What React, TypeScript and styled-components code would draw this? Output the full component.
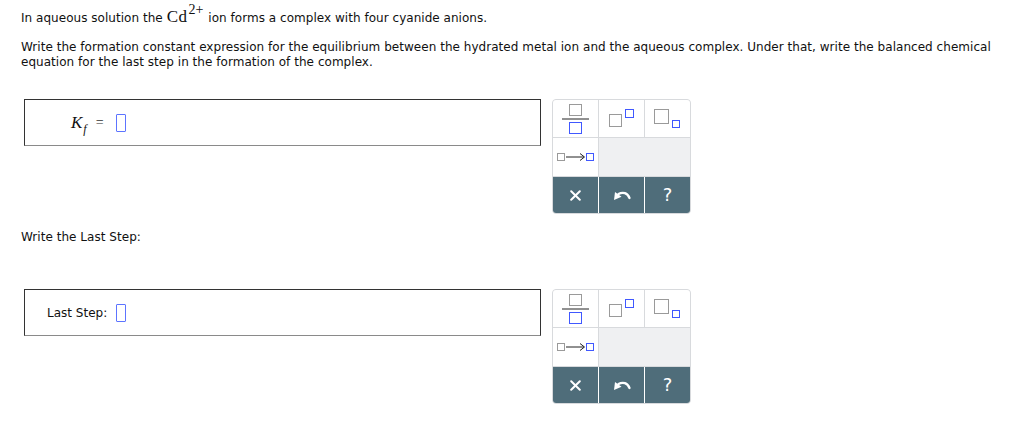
import React from "react";
import styled, { createGlobalStyle } from "styled-components";

const Global = createGlobalStyle`
  html, body { margin: 0; padding: 0; background: #fff; }
  body { font-family: "DejaVu Sans", Verdana, sans-serif; font-size: 12px; color: #111; }
`;

const Page = styled.div`
  padding: 9px 0 0 21px;
  width: 1003px;
`;

const Para = styled.p<{ $top?: number }>`
  margin: ${(p) => p.$top ?? 0}px 0 0 0;
  line-height: 15px;
  font-size: 12px;
  letter-spacing: 0.035px;
`;

const Serif = styled.span`
  font-family: "Liberation Serif", "Times New Roman", serif;
  font-size: 17px;
  letter-spacing: 0.5px;
`;

const Sup = styled.span`
  font-family: "Liberation Serif", serif;
  font-size: 14px;
  vertical-align: 8px;
  line-height: 0;
  margin-left: 1px;
  margin-right: 1px;
`;

const Section = styled.div<{ $top: number }>`
  display: flex;
  align-items: flex-start;
  gap: 11px;
  margin-top: ${(p) => p.$top}px;
  margin-left: 3px;
`;

const AnswerBox = styled.div`
  width: 515px;
  height: 45px;
  border: 1px solid #333;
  border-bottom-color: #8a8a8a;
  display: flex;
  align-items: center;
`;

const KLabel = styled.span`
  font-family: "Liberation Serif", serif;
  font-style: italic;
  font-size: 17px;
  margin-left: 46px;
  display: inline-flex;
  align-items: baseline;
`;

const SubF = styled.span`
  font-size: 12px;
  position: relative;
  top: 5px;
  margin-left: 1px;
`;

const Eq = styled.span`
  font-family: "Liberation Serif", serif;
  font-size: 14px;
  margin: 0 12px 0 9px;
  color: #333;
`;

const Slot = styled.span`
  display: inline-block;
  width: 8px;
  height: 16px;
  border: 1.5px solid #5d74ff;
  border-radius: 1px;
`;

const StepLabel = styled.span`
  margin-left: 22px;
  margin-right: 9px;
  font-size: 12px;
`;

const Palette = styled.div`
  width: 137px;
  border: 1px solid #d8dadd;
  border-radius: 4px;
  overflow: hidden;
  display: grid;
  grid-template-columns: 45px 45px 45px;
  grid-template-rows: 37px 38px 36px;
  column-gap: 1px;
  row-gap: 1px;
  background: #d8dadd;
`;

const Cell = styled.div<{ $empty?: boolean; $span?: number }>`
  background: ${(p) => (p.$empty ? "#eff0f2" : "#fff")};
  grid-column: span ${(p) => p.$span ?? 1};
  display: flex;
  align-items: center;
  justify-content: center;
`;

const DarkRow = styled.div`
  grid-column: span 3;
  display: grid;
  grid-template-columns: 45px 45px 45px;
  column-gap: 1px;
  background: #fff;
`;

const DarkBtn = styled.div`
  background: #4f6d7a;
  display: flex;
  align-items: center;
  justify-content: center;
  color: #fff;
`;

const G = "#9a9a9a";
const B = "#4058ff";

const FracIcon = () => (
  <svg width="27" height="30" viewBox="0 0 27 30">
    <rect x="7.5" y="0.5" width="12" height="11" fill="none" stroke={G} />
    <line x1="0" y1="15" x2="27" y2="15" stroke="#222" strokeWidth="1" />
    <rect x="7.5" y="18.5" width="12" height="11" fill="none" stroke={B} />
  </svg>
);

const SupIcon = () => (
  <svg width="26" height="19" viewBox="0 0 26 19">
    <rect x="0.5" y="5.5" width="12" height="12" fill="none" stroke={G} />
    <rect x="16.5" y="0.5" width="8" height="8" fill="none" stroke={B} />
  </svg>
);

const SubIcon = () => (
  <svg width="27" height="20" viewBox="0 0 27 20">
    <rect x="0.5" y="0.5" width="14" height="14" fill="none" stroke={G} />
    <rect x="18.5" y="11.5" width="7" height="7" fill="none" stroke={B} />
  </svg>
);

const ArrowIcon = () => (
  <svg width="38" height="10" viewBox="0 0 38 10">
    <rect x="0.5" y="1.5" width="7" height="7" fill="none" stroke={G} />
    <line x1="9" y1="5" x2="27" y2="5" stroke="#222" strokeWidth="1" />
    <path d="M23 1.5 L27.5 5 L23 8.5" fill="none" stroke="#222" strokeWidth="1" />
    <rect x="29.5" y="1.5" width="7" height="7" fill="none" stroke={B} />
  </svg>
);

const XIcon = () => (
  <svg width="11" height="11" viewBox="0 0 11 11">
    <path d="M1.2 1.2 L9.8 9.8 M9.8 1.2 L1.2 9.8" stroke="#fff" strokeWidth="2" strokeLinecap="round" />
  </svg>
);

const UndoIcon = () => (
  <svg width="18" height="11" viewBox="0 0 18 11">
    <path d="M5.5 4 C10 1.5 14.5 3 16.5 8" fill="none" stroke="#fff" strokeWidth="2.3" strokeLinecap="round" />
    <path d="M1 10 L2 2 L8.5 6.8 Z" fill="#fff" />
  </svg>
);

const Q = styled.span`
  font-family: "DejaVu Sans", sans-serif;
  font-size: 18px;
  color: #fff;
  line-height: 1;
`;

const Tools = () => (
  <Palette>
    <Cell><FracIcon /></Cell>
    <Cell><SupIcon /></Cell>
    <Cell><SubIcon /></Cell>
    <Cell><ArrowIcon /></Cell>
    <Cell $empty $span={2} />
    <DarkRow>
      <DarkBtn><XIcon /></DarkBtn>
      <DarkBtn><UndoIcon /></DarkBtn>
      <DarkBtn><Q>?</Q></DarkBtn>
    </DarkRow>
  </Palette>
);

export default function App() {
  return (
    <>
      <Global />
      <Page>
        <Para>
          In aqueous solution the <Serif>Cd</Serif>
          <Sup>2+</Sup> ion forms a complex with four cyanide anions.
        </Para>
        <Para $top={14}>
          Write the formation constant expression for the equilibrium between the hydrated metal ion and the aqueous complex. Under that, write the balanced chemical equation for the last step in the formation of the complex.
        </Para>
        <Section $top={29}>
          <AnswerBox>
            <KLabel>K<SubF>f</SubF></KLabel>
            <Eq>=</Eq>
            <Slot />
          </AnswerBox>
          <Tools />
        </Section>
        <Para $top={16}>Write the Last Step:</Para>
        <Section $top={44}>
          <AnswerBox>
            <StepLabel>Last Step:</StepLabel>
            <Slot />
          </AnswerBox>
          <Tools />
        </Section>
      </Page>
    </>
  );
}
